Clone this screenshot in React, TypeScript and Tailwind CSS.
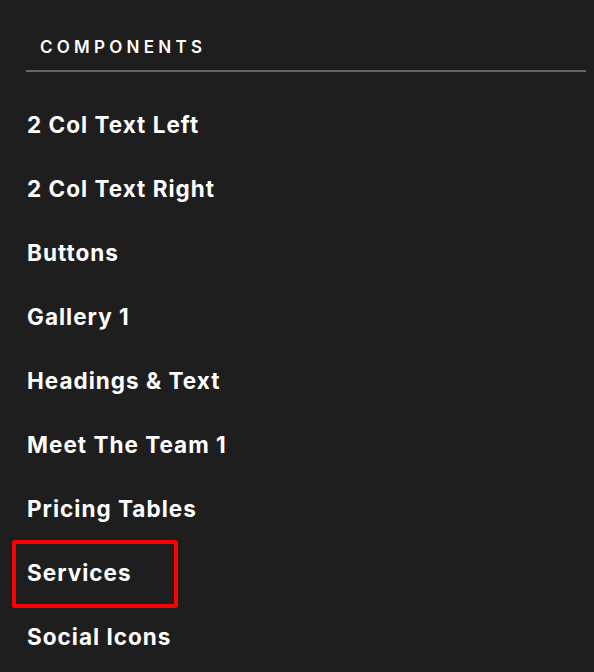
import React from 'react';

const items = [
  '2 Col Text Left',
  '2 Col Text Right',
  'Buttons',
  'Gallery 1',
  'Headings & Text',
  'Meet The Team 1',
  'Pricing Tables',
  'Services',
  'Social Icons',
];

export default function App() {
  return (
    <div
      className="h-[672px] w-full overflow-hidden bg-[#1e1e1e] pl-[26px] pr-2 pt-[35px] text-white"
      style={{ fontFamily: 'Inter, "Noto Sans", sans-serif' }}
    >
      <div className="pl-[14px] text-[17px] font-semibold leading-6 tracking-[0.25em]">COMPONENTS</div>
      <div className="mt-[11px] h-[2px] bg-[#666666]" />
      <ul className="mt-[21px]">
        {items.map(item => (
          <li key={item} className="relative flex h-16 items-center pl-px text-[22.5px] font-bold tracking-[0.045em]">
            {item}
            {item === 'Services' && (
              <span className="absolute left-[-14px] top-[-1px] h-[68px] w-[166px] rounded-[3px] border-4 border-[#ff0000]" />
            )}
          </li>
        ))}
      </ul>
    </div>
  );
}
